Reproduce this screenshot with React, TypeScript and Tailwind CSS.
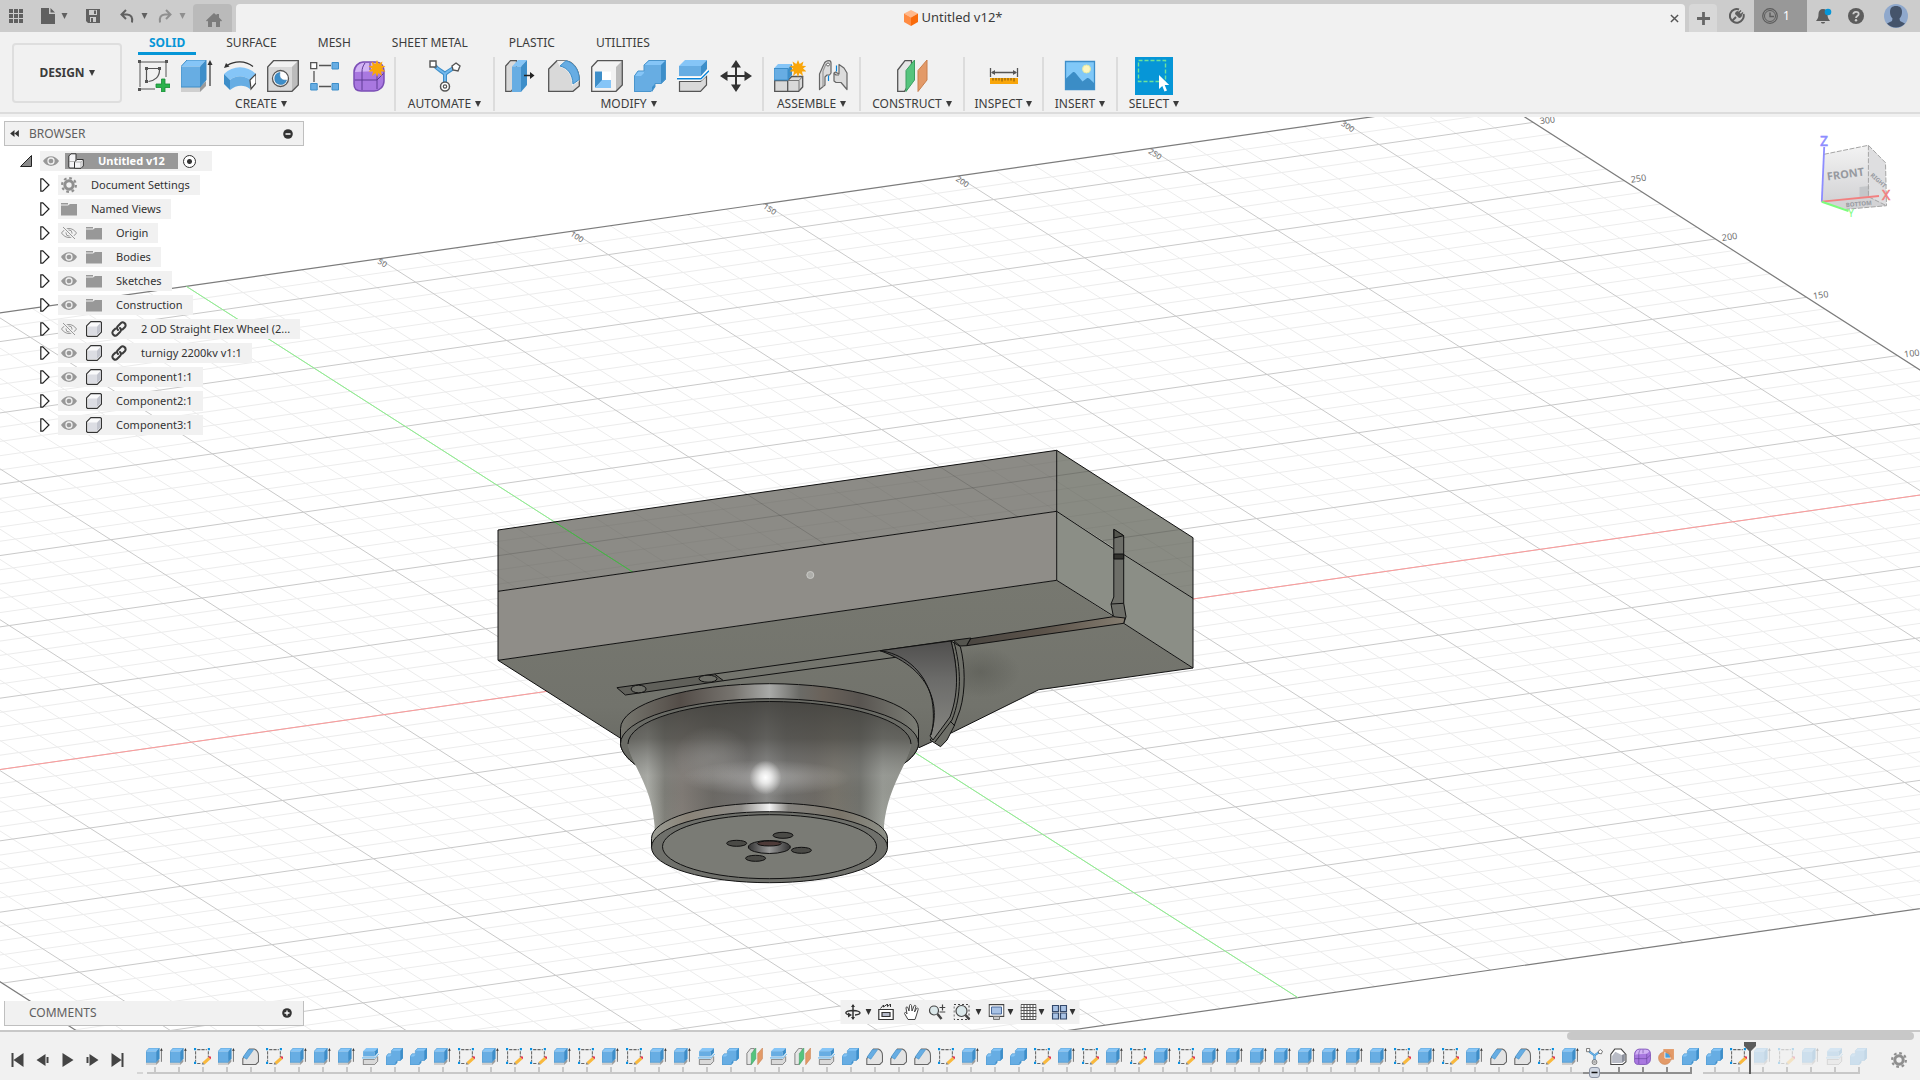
import { ReactNode } from 'react'
import cn from 'clsx'

interface IconProps {
  className?: string
}

const Caret = ({ className = 'w-[6px] h-[6px] text-[#3c3c3c]' }: IconProps) => (
  <svg viewBox="0 0 8 8" className={cn('shrink-0', className)} fill="currentColor">
    <path d="M0 0h8L4 8z" />
  </svg>
)

/* ---------- feature icons (toolbar + timeline) ---------- */

const SketchIcon = ({ className }: IconProps) => (
  <svg viewBox="0 0 32 32" className={className} fill="none">
    <path d="M3 2h24M2 3v24M28 3v14M3 29h14" stroke="#555" strokeWidth="1" />
    <path d="M0 0h3v3H0zM27 0h3v3h-3zM0 28h3v3H0zM7 7h3v3H7zM20 7h3v3h-3zM7 20h3v3H7z" fill="#555" />
    <path d="M10 8.500h10M8.500 10v10M21.500 10c0 7-5 11-11 11.500" stroke="#555" strokeWidth="1.200" />
    <path d="M23.500 19h3.500v5h5v3.500h-5V32h-3.500v-4.500H18V24h5.500z" fill="#2bb24c" stroke="#178a35" strokeWidth=".8" />
  </svg>
)

const SketchSmallIcon = ({ className }: IconProps) => (
  <svg viewBox="0 0 16 16" className={className} fill="none">
    <path d="M3 1.500h9M1.500 3v10M13.500 3v6M3 14.500h4" stroke="#666" strokeDasharray="3 1" />
    <path d="M0 0h2v2H0zM13 0h2v2h-2zM0 13h2v2H0z" fill="#0a8fe0" />
    <path d="M8 13.500l5.500-5 2 2-5.500 5z" fill="#f9b93e" />
    <path d="M13.500 8.500l1.500-1 1.500 1.500-1 1.500z" fill="#e8364f" />
    <path d="M8 13.500l2 2H7.300z" fill="#777" />
  </svg>
)

const ExtrudeIcon = ({ className }: IconProps) => (
  <svg viewBox="0 0 32 32" className={className}>
    <path d="M0 27h19v5H0z" fill="#cfcfcf" />
    <path d="M19 27l6-6v5l-6 6z" fill="#9a9a9a" />
    <path d="M0 6.500L6 0h19l-6 6.500z" fill="#85c5f7" />
    <path d="M0 6.500h19V27H0z" fill="#67ade3" />
    <path d="M19 6.500L25 0v20l-6 7z" fill="#3d8ec9" />
    <path d="M0 6.500L6 0h19v20l-6 7H0z" fill="none" stroke="#3f8dc6" />
    <path d="M29 4v22" stroke="#333" strokeWidth="1.200" />
    <path d="M29 0l2.500 5h-5z" fill="#333" />
  </svg>
)

const RevolveIcon = ({ className }: IconProps) => (
  <svg viewBox="0 0 32 32" className={className}>
    <path d="M3 5.500C11 .5 21 .5 29 6.500" fill="none" stroke="#333" strokeWidth="1.300" />
    <path d="M0 8l2-5 3.500 3.500z" fill="#333" />
    <path d="M0 14c9-9 23-9 32 0l-6 6c-6-5-14-5-20 0z" fill="#85c5f7" />
    <path d="M0 14l6 6v10l-6-6z" fill="#3d8ec9" />
    <path d="M6 20c6-5 14-5 20 0v9c-6-5-14-4-20 1z" fill="#67ade3" />
    <path d="M26 20l6-6v9l-5 6z" fill="#fff" stroke="#444" strokeWidth="1.200" />
  </svg>
)

const HoleIcon = ({ className }: IconProps) => (
  <svg viewBox="0 0 32 32" className={className}>
    <path d="M.7 7L6.500.7h24.800V25L25 31.300H.7z" fill="#d9d9d9" />
    <path d="M.7 7L6.500.7h24.800L25 7z" fill="#f2f2f2" />
    <path d="M25 7l6.300-6.300V25L25 31.300z" fill="#bcbcbc" />
    <path d="M.7 7L6.500.7h24.800V25L25 31.300H.7z" fill="none" stroke="#555" strokeWidth="1.300" />
    <circle cx="13.500" cy="18.500" r="8" fill="#fff" stroke="#555" strokeWidth="1.300" />
    <path d="M13 12.500a6 6 0 1 0 6.500 7.500c-4 1-8-2-6.500-7.500z" fill="#3d8ec9" stroke="#2f78b0" strokeWidth=".6" />
  </svg>
)

const PatternIcon = ({ className }: IconProps) => (
  <svg viewBox="0 0 32 32" className={className}>
    <path d="M9 5.500h12M9 26.500h12M4 11v11" stroke="#555" strokeWidth="1.300" fill="none" />
    <path d="M.7 2.700h6v6h-6z" fill="#fff" stroke="#555" strokeWidth="1.300" />
    <path d="M22 2.500h6.500V9H22zM.7 23.500h6.500V30H.7zM22 23.500h6.500V30H22z" fill="#67ade3" stroke="#3d8ec9" />
  </svg>
)

const FormBody = () => (
  <>
    <path d="M1 12c0-6 5-10 9-10h12c6 0 9 4 9 9v10c0 6-5 10-10 10H8c-5 0-7-3-7-7z" fill="#a978e0" />
    <path d="M2 12C3 6 7 2.500 11 2.500h11c3 0 6 2 7 4L24 11z" fill="#d2b3f5" />
    <path d="M12 3c-2 3-3 5-3 9v18M1.500 20H24l7-7M17 3v7M24 11v18" fill="none" stroke="#5f3a94" strokeWidth="1" />
    <path d="M1 12c0-6 5-10 9-10h12c6 0 9 4 9 9v10c0 6-5 10-10 10H8c-5 0-7-3-7-7z" fill="none" stroke="#7b4fb5" strokeWidth="1.500" />
  </>
)

const Spark = () => (
  <path d="M0-8l1.700 4 3.800-2.500-1.200 4.300L8.500-2 5 .5 8.500 3.500 4 3.500 5 8 1.500 5 0 9-1.500 5-5 8-4 3.500-8.500 3.500-5 .5-8.500-2-4.300-2.200-5.500-6.500-1.700-4z" fill="#f9a60a" />
)

const FormIcon = ({ className }: IconProps) => (
  <svg viewBox="0 0 32 32" className={cn('overflow-visible', className)}>
    <FormBody />
    <g transform="translate(24 8)"><Spark /></g>
  </svg>
)

const FormSmallIcon = ({ className }: IconProps) => (
  <svg viewBox="0 0 32 32" className={className}><FormBody /></svg>
)

const AutomateIcon = ({ className }: IconProps) => (
  <svg viewBox="0 0 32 32" className={className}>
    <path d="M5 5c4 5 8 6 11 9 3-3 6-4 10-7M16 13v11" fill="none" stroke="#3d8ec9" strokeWidth="4" />
    <path d="M5 5c4 5 8 6 11 9 3-3 6-4 10-7M16 13v11" fill="none" stroke="#73b8ec" strokeWidth="2" />
    <path d="M1 1h6v6H1z" fill="#fff" stroke="#555" strokeWidth="1.400" />
    <path d="M27 3l4 3-2 5-5-1-1-4z" fill="#fff" stroke="#555" strokeWidth="1.400" />
    <circle cx="16" cy="26.500" r="4.500" fill="#fff" stroke="#555" strokeWidth="1.500" />
    <circle cx="16" cy="26.500" r="1.700" fill="#fff" stroke="#555" strokeWidth="1.200" />
  </svg>
)

const PressPullIcon = ({ className }: IconProps) => (
  <svg viewBox="0 0 32 32" className={className}>
    <path d="M.7 6L5.500.7h6V25L6 31.300H.7z" fill="#d9d9d9" stroke="#555" strokeWidth="1.200" />
    <path d="M7 6.500L13 0h9l-6 6.500z" fill="#85c5f7" />
    <path d="M7 6.500h9V32H7z" fill="#67ade3" />
    <path d="M16 6.500L22 0v25l-6 7z" fill="#3d8ec9" />
    <path d="M19 15.500h7" stroke="#222" strokeWidth="1.500" />
    <path d="M25 12l4.500 3.500L25 19z" fill="#222" />
  </svg>
)

const FilletIcon = ({ className }: IconProps) => (
  <svg viewBox="0 0 32 32" className={className}>
    <path d="M.7 9L9 .7h7C25 1 31 9 31.300 20v6L25 31.300H.7z" fill="#d9d9d9" stroke="#555" strokeWidth="1.300" />
    <path d="M9 .7h8C27 2 31 11 31.300 21L24 26c0-10-4-17-12-19z" fill="#f0f0f0" />
    <path d="M12 6l6-5.300C27 3 31 11 31.300 19.500L25 24C24.500 14 20 8 12 6z" fill="#67ade3" stroke="#3d8ec9" />
  </svg>
)

const ShellIcon = ({ className }: IconProps) => (
  <svg viewBox="0 0 32 32" className={className}>
    <path d="M.7 7L6.500.7h24.800V25L25 31.300H.7z" fill="#f2f2f2" />
    <path d="M25 7l6.300-6.300V25L25 31.300z" fill="#bcbcbc" />
    <path d="M.7 7L6.500.7h24.800V25L25 31.300H.7z" fill="none" stroke="#555" strokeWidth="1.300" />
    <path d="M4 11.500h16v16H4z" fill="#fff" />
    <path d="M4 11.500h7v9L4 28z" fill="#3d8ec9" />
    <path d="M4 28l7-8h9v8z" fill="#85c5f7" />
  </svg>
)

const CombineIcon = ({ className }: IconProps) => (
  <svg viewBox="0 0 32 32" className={className}>
    <path d="M0 16l4-5h6V5l5-5h17v19l-5 5h-6v3l-4 5H0z" fill="#67ade3" />
    <path d="M10 5l5-5h17l-5 5zM0 16l4-5h6v2l-3 3z" fill="#85c5f7" />
    <path d="M27 5l5-5v19l-5 5zM18 27l3-3v3l-3 5z" fill="#3d8ec9" />
    <path d="M.5 16L4 11h6V5l5-4.500h16.500V19L27 23.500h-6V27l-4 4.500H.5z" fill="none" stroke="#4a95cc" />
  </svg>
)

const SplitIcon = ({ className }: IconProps) => (
  <svg viewBox="0 0 32 32" className={className}>
    <path d="M2 6l6-6h22l-6 6z" fill="#85c5f7" />
    <path d="M2 6h22v10H2z" fill="#67ade3" />
    <path d="M24 6l6-6v9l-6 7z" fill="#3d8ec9" />
    <path d="M2.500 21.500h21l6-6V25l-6 6.300h-21z" fill="#d9d9d9" stroke="#555" strokeWidth="1.200" />
    <path d="M0 18.700h24l8-8" fill="none" stroke="#fff" strokeWidth="3.500" />
    <path d="M0 18.700h24l8-8" fill="none" stroke="#0a84d8" strokeWidth="1.400" />
  </svg>
)

const MoveIcon = ({ className }: IconProps) => (
  <svg viewBox="0 0 32 32" className={className} fill="#333">
    <path d="M15 6h2v9h9v2h-9v9h-2v-9H6v-2h9z" />
    <path d="M16 0l5 7.500H11zM16 32l5-7.500H11zM0 16l7.500-5v10zM32 16l-7.500-5v10z" />
  </svg>
)

const NewComponentIcon = ({ className }: IconProps) => (
  <svg viewBox="0 0 32 32" className={className}>
    <path d="M.7 20.500h13v10.800H.7zM13.700 20.500l4-4h11v10.500l-4 4.300h-11z" fill="#d9d9d9" stroke="#555" strokeWidth="1.300" />
    <path d="M25 20.500l3.700-4M13.700 20.500H25v10.500" fill="none" stroke="#777" />
    <path d="M0 8.500L4 4h14l-4 4.500z" fill="#85c5f7" />
    <path d="M0 8.500h14V20H0z" fill="#67ade3" stroke="#3d8ec9" />
    <path d="M14 8.500L18 4v11l-4 5z" fill="#3d8ec9" />
    <g transform="translate(24 8)"><Spark /></g>
  </svg>
)

const JointIcon = ({ className }: IconProps) => (
  <svg viewBox="0 0 32 32" className={className} fill="#dcdcdc" stroke="#666" strokeWidth="1.200" strokeLinejoin="round">
    <path d="M2.500 14L7 4c1-2.500 3-3.300 5-3.300 1.500 0 2 1 2 2.300v10l-1.500 2H10L8 17v8l-5.500 4.500z" />
    <path d="M6 11v16M6 11l3-7" fill="none" stroke="#999" />
    <path d="M30 29.500V13l-3-5-5-3.500V14l-3.500-2-1.500 1v8l2 1.500h5l6 7z" />
    <path d="M17 13.500l2 1.500h3" fill="none" />
    <circle cx="11" cy="4.500" r="1.500" fill="#fff" strokeWidth="1" />
    <path d="M11.500 15.500v5.500M19.500 5.500v6" stroke="#0a84d8" />
  </svg>
)

const PlaneIcon = ({ className }: IconProps) => (
  <svg viewBox="0 0 32 32" className={className}>
    <path d="M1.700 10L9 .7h6.500V20L8.500 31.300H1.700z" fill="#e6e6e6" stroke="#555" strokeWidth="1.300" />
    <path d="M10 10.500L18.500 0v20L10 31.500z" fill="#55c47d" stroke="#3a9f60" />
    <path d="M22 10.500L31 0v20l-9 11.500z" fill="#e39a68" stroke="#c97f4c" />
  </svg>
)

const MeasureIcon = ({ className }: IconProps) => (
  <svg viewBox="0 0 32 32" className={className}>
    <path d="M2.500 8v9M29.500 8v9M4 12.500h24" stroke="#555" strokeWidth="1.300" />
    <path d="M3 12.500l4-2.500v5zM29 12.500L25 10v5z" fill="#555" />
    <path d="M2 18h28v6H2z" fill="#f9a60a" />
    <path d="M5 18v2.500M8 18v2.500M11 18v2.500M14 18v3.500M17 18v2.500M20 18v2.500M23 18v2.500M26 18v3.500" stroke="#7a5208" />
  </svg>
)

const ImageIcon = ({ className }: IconProps) => (
  <svg viewBox="0 0 32 32" className={className}>
    <path d="M1.500 1.500h29v28h-29z" fill="#80c8f8" />
    <path d="M1.500 19l7-6.500c1-.8 2-.6 3 .5l7 8.500 4-3c1-.6 2-.5 3 .3l5 4.700v6h-29z" fill="#3b8dc6" />
    <circle cx="22.500" cy="9" r="4" fill="#fdf6bf" stroke="#dfe9a8" />
    <path d="M1.500 1.500h29v28h-29z" fill="none" stroke="#3d8ec9" strokeWidth="1.300" />
  </svg>
)

const SelectIcon = ({ className }: IconProps) => (
  <svg viewBox="0 0 38 38" className={className}>
    <path d="M0 0h38v38H0z" fill="#0696d7" />
    <path d="M3.500 3.500h27v21h-27z" fill="none" stroke="#6de39b" strokeWidth="1.400" strokeDasharray="4 2" />
    <path d="M24 18v14l3.300-3 2.200 5.500 2.500-1-2.300-5.500h4.500z" fill="#fff" />
  </svg>
)

const ChamferIcon = ({ className }: IconProps) => (
  <svg viewBox="0 0 32 32" className={className}>
    <path d="M1.500 20L14 2h9c5 2 8 6 8 12v12l-5 5H1.500z" fill="#e3e3e3" stroke="#666" strokeWidth="2" />
    <path d="M2 17L12 3h10L9 21z" fill="#67ade3" stroke="#3d8ec9" />
  </svg>
)

const DomeIcon = ({ className }: IconProps) => (
  <svg viewBox="0 0 32 32" className={className}>
    <path d="M1.500 12L9 2h12l9 10v14l-6 5H1.500z" fill="#fff" stroke="#444" strokeWidth="2" />
    <path d="M4 28V15l6-8 12 6v15z" fill="#b9bcc6" />
    <path d="M22 13l6-2v13l-6 4z" fill="#8b8f9b" />
  </svg>
)

const DerivedIcon = ({ className }: IconProps) => (
  <svg viewBox="0 0 32 32" className={className}>
    <path d="M10 2h20v20H10z" fill="#e39a68" />
    <circle cx="13" cy="19" r="12" fill="#e39a68" stroke="#c97f4c" />
    <path d="M13 19V9a10 10 0 0 1 10 10z" fill="#4a9fdc" />
    <path d="M13 7v12h12" fill="none" stroke="#fff" strokeWidth="1.500" />
  </svg>
)

/* ---------- title bar ---------- */

const TitleBar = () => (
  <header className="flex h-8 bg-[#cccccc] text-[#606060]">
    <div className="flex items-center pl-[9px] w-[193px] shrink-0">
      <button aria-label="Data panel">
        <svg viewBox="0 0 14 14" className="w-[14px] h-[14px]" fill="currentColor">
          <path d="M0 0h4v4H0zM5 0h4v4H5zM10 0h4v4h-4zM0 5h4v4H0zM5 5h4v4H5zM10 5h4v4h-4zM0 10h4v4H0zM5 10h4v4H5zM10 10h4v4h-4z" />
        </svg>
      </button>
      <button aria-label="File" className="flex items-center gap-[6px] ml-[18px]">
        <svg viewBox="0 0 14 16" className="w-[14px] h-4" fill="currentColor">
          <path d="M0 0h8v6h6v10H0zM9.500 0L14 4.500H9.500z" />
        </svg>
        <Caret className="w-[7px] h-[6px]" />
      </button>
      <button aria-label="Save" className="ml-[18px]">
        <svg viewBox="0 0 14 14" className="w-[14px] h-[14px]" fill="currentColor">
          <path fillRule="evenodd" d="M0 0h14v14H2l-2-2zM3 1v5h8V1zM4 8v5h6V8zM8 1.500h2v3.500H8zM5 9h2v4H5z" />
        </svg>
      </button>
      <button aria-label="Undo" className="flex items-center gap-[7px] ml-5">
        <svg viewBox="0 0 14 14" className="w-[14px] h-[14px]" fill="none" stroke="currentColor" strokeWidth="2">
          <path d="M6 1L1.500 5.500 6 10M2 5.500h5c4 0 6 3 5 8" />
        </svg>
        <Caret className="w-[7px] h-[6px]" />
      </button>
      <button aria-label="Redo" className="flex items-center gap-[7px] ml-[10px] text-[#8f8f8f]">
        <svg viewBox="0 0 14 14" className="w-[14px] h-[14px]" fill="none" stroke="currentColor" strokeWidth="2">
          <path d="M8 1l4.500 4.500L8 10M12 5.500H7c-4 0-6 3-5 8" />
        </svg>
        <Caret className="w-[7px] h-[6px]" />
      </button>
    </div>
    <button aria-label="Home" className="mt-1 w-[39px] shrink-0 rounded-t bg-[#bababa] flex items-center justify-center pl-[3px] pt-[3px]">
      <svg viewBox="0 0 16 14" className="w-4 h-[14px]" fill="#7c7c7c">
        <path d="M8 0l2.500 2.200V1H13v3.500L16 7.500l-1 1-1-.8V14h-4V9H6v5H2V7.700l-1 .8-1-1z" />
      </svg>
    </button>
    <div className="flex-1 mt-1 ml-1 rounded-t bg-[#f1f1f1] flex items-center">
      <div className="flex-1 flex items-center justify-center gap-1 text-[13px] text-[#3c3c3c]">
        <svg viewBox="0 0 14 16" className="w-[14px] h-4">
          <path d="M7 0l7 3.500L7 7.500 0 3.500z" fill="#ffb98c" />
          <path d="M0 3.500l7 4V16l-7-4z" fill="#ff8b42" />
          <path d="M14 3.500l-7 4V16l7-4z" fill="#f96b0c" />
        </svg>
        <span>Untitled v12*</span>
      </div>
      <button aria-label="Close tab" className="mr-[6px]">
        <svg viewBox="0 0 10 10" className="w-[9px] h-[9px]" stroke="#555" strokeWidth="1.600">
          <path d="M1 1l8 8M9 1L1 9" />
        </svg>
      </button>
    </div>
    <button aria-label="New tab" className="mt-1 ml-1 w-7 rounded-t bg-[#d8d8d8] flex items-center justify-center">
      <svg viewBox="0 0 14 14" className="w-[13px] h-[13px]" fill="#666"><path d="M5.500 0h3v5.500H14v3H8.500V14h-3V8.500H0v-3h5.500z" /></svg>
    </button>
    <button aria-label="Extensions" className="ml-3">
      <svg viewBox="0 0 16 16" className="w-4 h-4" fill="none">
        <path d="M13.500 11.500a6.800 6.800 0 1 1-3.500-10M14.500 6c.5 2 .2 4-1 5.500" stroke="#5c5c5c" strokeWidth="2" />
        <path d="M3 13l4-4" stroke="#5c5c5c" strokeWidth="2" />
        <path d="M6 6l4 4c2 0 3-1.500 3-3L11 5 9 3C7.500 3 6 4 6 6z" fill="#5c5c5c" />
        <path d="M9.500 5L12 2.500M11.500 7L14 4.500" stroke="#5c5c5c" strokeWidth="1.400" />
      </svg>
    </button>
    <button aria-label="Job status" className="ml-[9px] w-[53px] bg-[#989898] flex items-center gap-[5px] pl-2 text-[12px] text-white">
      <svg viewBox="0 0 16 16" className="w-4 h-4" fill="none" stroke="#5c5c5c">
        <circle cx="8" cy="8" r="7.300" strokeWidth="1.200" />
        <circle cx="8" cy="8" r="5.500" strokeWidth="1" />
        <path d="M8 4.500V8.500h4" strokeWidth="1.400" />
      </svg>
      1
    </button>
    <button aria-label="Notifications" className="ml-[9px]">
      <svg viewBox="0 0 16 16" className="w-4 h-4">
        <path d="M7 1c3 0 4.500 2 4.500 5S12 10.500 14 13H0c2-2.500 2.500-4 2.500-7S4 1 7 1zM5 14h4c0 2-4 2-4 0z" fill="#5c5c5c" />
        <circle cx="12" cy="4" r="3.300" fill="#0696d7" />
      </svg>
    </button>
    <button aria-label="Help" className="ml-4">
      <svg viewBox="0 0 16 16" className="w-4 h-4">
        <circle cx="8" cy="8" r="8" fill="#5c5c5c" />
        <path d="M5.300 6.300C5.300 3 10.700 3 10.700 6c0 2-2.700 2-2.700 4" fill="none" stroke="#ccc" strokeWidth="1.800" />
        <circle cx="8" cy="12.300" r="1.200" fill="#ccc" />
      </svg>
    </button>
    <button aria-label="Account" className="ml-5 mr-3">
      <svg viewBox="0 0 24 24" className="w-6 h-6">
        <circle cx="12" cy="12" r="12" fill="#8fa8cc" />
        <path d="M12 2c4 0 6 2 6 6 0 3-1 5-2.500 6.500L16 17l5 2.500A12 12 0 0 1 3 19.500L8 17l.5-2.500C7 13 6 11 6 8c0-4 2-6 6-6z" fill="#45546b" />
      </svg>
    </button>
  </header>
)

/* ---------- ribbon ---------- */

const tabs = ['SOLID', 'SURFACE', 'MESH', 'SHEET METAL', 'PLASTIC', 'UTILITIES']

type Tool = [string, (p: IconProps) => ReactNode]

const groups: { name: string; width: string; tools: Tool[] }[] = [
  {
    name: 'CREATE',
    width: 'w-[268px]',
    tools: [
      ['Create Sketch', SketchIcon],
      ['Extrude', ExtrudeIcon],
      ['Revolve', RevolveIcon],
      ['Hole', HoleIcon],
      ['Rectangular Pattern', PatternIcon],
      ['Create Form', FormIcon],
    ],
  },
  { name: 'AUTOMATE', width: 'w-[99px]', tools: [['Automated Modeling', AutomateIcon]] },
  {
    name: 'MODIFY',
    width: 'w-[269px]',
    tools: [
      ['Press Pull', PressPullIcon],
      ['Fillet', FilletIcon],
      ['Shell', ShellIcon],
      ['Combine', CombineIcon],
      ['Split Body', SplitIcon],
      ['Move/Copy', MoveIcon],
    ],
  },
  { name: 'ASSEMBLE', width: 'w-[97px]', tools: [['New Component', NewComponentIcon], ['Joint', JointIcon]] },
  { name: 'CONSTRUCT', width: 'w-[104px]', tools: [['Offset Plane', PlaneIcon]] },
  { name: 'INSPECT', width: 'w-[79px]', tools: [['Measure', MeasureIcon]] },
  { name: 'INSERT', width: 'w-[74px]', tools: [['Insert Image', ImageIcon]] },
  { name: 'SELECT', width: 'w-[72px]', tools: [['Select', SelectIcon]] },
]

const Ribbon = () => (
  <div className="flex h-[82px] bg-[#f1f1f1] border-b-2 border-[#dcdcdc] text-[12px] text-[#3c3c3c]">
    <button className="ml-3 mt-[11px] w-[110px] h-[60px] shrink-0 border-2 border-[#dedede] rounded font-bold flex items-center justify-center gap-1">
      DESIGN <Caret />
    </button>
    <div>
      <nav className="flex gap-[19px] ml-4">
        {tabs.map((t, i) => (
          <button
            key={t}
            className={cn('px-[11px] h-[23px] pt-[2px] leading-4 border-b-[3px] whitespace-nowrap', i === 0 ? 'font-bold text-[#0696d7] border-[#0696d7]' : 'border-transparent')}
          >
            {t}
          </button>
        ))}
      </nav>
      <div className="flex mt-[2px] ml-[6px]">
        {groups.map((g, i) => (
          <div key={g.name} className={cn('h-[54px] flex flex-col items-center border-[#dcdcdc]', g.width, i < groups.length - 1 && 'border-r-2')}>
            <div className="flex gap-[11px] h-[38px] shrink-0 items-center">
              {g.tools.map(([name, Icon]) => (
                <button key={name} aria-label={name}>
                  <Icon className={name === 'Select' ? 'w-[38px] h-[38px]' : 'w-8 h-8'} />
                </button>
              ))}
            </div>
            <button className="flex shrink-0 items-center gap-1 leading-4 mt-[1px] whitespace-nowrap">
              {g.name} <Caret />
            </button>
          </div>
        ))}
      </div>
    </div>
  </div>
)

/* ---------- canvas ---------- */

// grid runs in 10 mm steps, every 5th line is major; screen vectors are per 50 mm
const O = [769.4, 659.5]
const A = [192.7, -27.55]
const B = [91.1, 58.3]
const X0 = -27, X1 = 34, Y0 = -32, Y1 = 29

const pt = (x: number, y: number) => [
  O[0] + (A[0] * x + B[0] * y) / 5,
  O[1] + (A[1] * x + B[1] * y) / 5,
]

const seg = (x1: number, y1: number, x2: number, y2: number) => {
  const [a, b] = pt(x1, y1)
  const [c, d] = pt(x2, y2)
  return `M${a.toFixed(1)} ${b.toFixed(1)}L${c.toFixed(1)} ${d.toFixed(1)}`
}

const range = (a: number, b: number) => Array.from({ length: b - a + 1 }, (_, i) => a + i)
const lines = (major: boolean) =>
  [
    ...range(X0 + 1, X1 - 1).filter((x) => (x % 5 === 0) === major).map((x) => seg(x, Y0, x, Y1)),
    ...range(Y0 + 1, Y1 - 1).filter((y) => (y % 5 === 0) === major).map((y) => seg(X0, y, X1, y)),
  ].join('')

const minorPath = lines(false)
const majorPath = lines(true)
const edgePath = seg(X0, Y0, X1, Y0) + seg(X1, Y0, X1, Y1) + seg(X1, Y1, X0, Y1) + seg(X0, Y1, X0, Y0)

const Grid = () => (
  <g fill="none" strokeWidth="1">
    <path d={minorPath} stroke="#ececec" />
    <path d={majorPath} stroke="#c9c9c9" />
    <path d={edgePath} stroke="#7c7c7c" strokeWidth="1.200" />
    <path d={seg(X0, 0, X1, 0)} stroke="#ff9a9a" />
    <path d={seg(0, Y0, 0, Y1)} stroke="#8df58d" />
  </g>
)

const Model = () => (
  <g strokeLinejoin="round">
    {/* block */}
    <path d="M498 530L1056.700 450.300V511.300L498 591.300z" fill="#8c8b86" />
    <path d="M1056.700 450.300L1193 537.700V598.300L1056.700 511.300z" fill="#898b83" />
    <path d="M498 591.300L1056.700 511.300V580.300L498 660.300z" fill="#8f8d88" />
    <path d="M1056.700 511.300L1193 598.300V668L1056.700 580.300z" fill="#8b8e86" />
    <path d="M498 660.300L1056.700 580.300 1193 668 1038.800 689.700 953.800 731.700 919 747.700 770 790 620.600 738.300z" fill="url(#under)" />
    <ellipse cx="980" cy="672" rx="40" ry="26" fill="url(#soft)" />
    <g clipPath="url(#upper)">
      <path d={minorPath} stroke="#000" strokeOpacity=".04" fill="none" />
      <path d={majorPath} stroke="#000" strokeOpacity=".14" fill="none" />
      <path d={seg(0, Y0, 0, 0)} stroke="#3fc03f" fill="none" />
    </g>
    <g fill="none" stroke="#111">
      <path d="M498 660.300V530L1056.700 450.300 1193 537.700V668L1038.800 689.700 953.800 731.700 919 747.700M498 660.300L620.600 738.300M1056.700 450.300V580.300L498 660.300M1056.700 580.300L1113.300 616M1123.700 623.300L1193 668M498 591.300L1056.700 511.300 1113.800 549M1123.700 554.500L1193 598.300" />
    </g>

    {/* wire slot */}
    <path d="M1113.800 529.300L1123.700 535.700V603.300L1126 616.700 1123.700 623.300 1113.300 616 1111 604 1113.800 597z" fill="#6d6e68" stroke="#111" />
    <path d="M1114 529.300L1123.700 535.700 1114 538z" fill="#55564f" stroke="#111" />
    <path d="M1114 554h9.700v5H1114z" fill="#33332f" stroke="#111" />
    <path d="M1111 604l12.700-.7" stroke="#111" />
    <path d="M970.800 638.700L1113.300 616.700 1125 618 1123.700 623.300 966.500 645.700z" fill="url(#groove)" stroke="#111" />
    <path d="M953.300 640.300L970.800 638 966.500 645.700 960 646z" fill="#55554f" stroke="#111" />
    <path d="M616.900 687.700L714.500 674 723.500 680.700 625.300 695z" fill="#60605a" stroke="#111" />
    <path d="M714.500 674L880 650.700 953.300 640.300M723.500 680.700L900 656.700" fill="none" stroke="#111" />
    <ellipse cx="638.600" cy="689" rx="7.500" ry="3.800" fill="#6e6f68" stroke="#111" />
    <ellipse cx="708" cy="678.700" rx="9" ry="3.500" fill="#6e6f68" stroke="#111" />

    {/* blade */}
    <path d="M951 641L960.400 646.700C965 665 966 690 960 710L953.800 726.700 947 740 940.600 746.700 930 740 947.200 720C960 690 957 665 951 641z" fill="#6e6f68" stroke="#111" />
    <path d="M880 650.700L951 641C957 665 960 690 950 717L933 740 930 736C940 712 936 670 880 650.700z" fill="url(#blade)" stroke="#111" />
    <path d="M880 650.700C900 653 925 668 932 700C934 712 934 725 931 735M954 642C961 668 962 695 952 720L935 742M950 721L955 726" fill="none" stroke="#111" />

    {/* upper flange */}
    <path d="M620.500 743.700V728.700A149 45 0 0 1 918.500 728.700V743.700C918.500 750 912 759 901.400 765H636C627 759 620.500 750 620.500 743.700z" fill="url(#rim)" stroke="#111" />
    <path d="M620.500 743.700A149 45 0 0 1 918.500 743.700C918.500 750 912 759 901.400 765H636C627 759 620.500 750 620.500 743.700z" fill="#6a6b65" stroke="#111" />
    <path d="M628 744A141.500 42.500 0 0 1 911 744C908 765 888 785 884 826V850H654.600V826C652 785 631 765 628 744z" fill="url(#metal)" />
    <path d="M628 744A141.500 42.500 0 0 1 911 744C908 765 888 785 884 826V850H654.600V826C652 785 631 765 628 744z" fill="url(#shade)" />
    <ellipse cx="712" cy="756" rx="38" ry="30" fill="url(#glow)" opacity=".16" />
    <ellipse cx="766" cy="778" rx="85" ry="18" fill="url(#glow)" opacity=".28" />
    <ellipse cx="765.500" cy="777.500" rx="16" ry="17" fill="url(#glow)" />
    <path d="M628 744A141.500 42.500 0 0 1 911 744" fill="none" stroke="#111" />

    {/* lower flange */}
    <path d="M651.500 847V838.500A118 35.500 0 0 1 887.500 838.500V847z" fill="url(#rim2)" stroke="#111" />
    <ellipse cx="769.500" cy="847.200" rx="118" ry="35.500" fill="#6f706b" stroke="#111" />
    <ellipse cx="769.500" cy="846.700" rx="107" ry="32" fill="#7a7b75" stroke="#111" />
    <g fill="#4a4a46" stroke="#111">
      <ellipse cx="783" cy="835.300" rx="10" ry="3" />
      <ellipse cx="736.700" cy="843.300" rx="10" ry="3" />
      <ellipse cx="801.400" cy="850.300" rx="10" ry="3" />
      <ellipse cx="755.600" cy="858.300" rx="10" ry="3" />
      <ellipse cx="769.300" cy="847" rx="21" ry="6.500" fill="url(#bore)" />
      <ellipse cx="769.300" cy="843.500" rx="12" ry="2.500" fill="#4d3a38" />
    </g>
    <circle cx="810.300" cy="575" r="3.500" fill="#aeaeaa" stroke="#c9c9c6" />
  </g>
)

const Defs = () => (
  <defs>
    <clipPath id="upper"><path d="M498 530L1056.700 450.300 1193 537.700V598.300L1056.700 511.300 498 591.300z" /></clipPath>
    <linearGradient id="under" x1="0" x2="0" y1="0" y2="1">
      <stop offset="0" stopColor="#777870" /><stop offset=".6" stopColor="#72736c" /><stop offset="1" stopColor="#62635d" />
    </linearGradient>
    <radialGradient id="soft"><stop offset="0" stopColor="#4c4d47" stopOpacity=".4" /><stop offset="1" stopColor="#4c4d47" stopOpacity="0" /></radialGradient>
    <linearGradient id="groove"><stop offset="0" stopColor="#4a4641" /><stop offset=".5" stopColor="#5d544b" /><stop offset="1" stopColor="#857d70" /></linearGradient>
    <linearGradient id="blade" x1="0" x2="0" y1="0" y2="1">
      <stop offset="0" stopColor="#504f4e" /><stop offset=".4" stopColor="#6c6c6a" /><stop offset="1" stopColor="#868681" />
    </linearGradient>
    <linearGradient id="rim">
      <stop offset="0" stopColor="#77776f" /><stop offset=".2" stopColor="#544d48" /><stop offset=".38" stopColor="#77746f" />
      <stop offset=".5" stopColor="#a9aaa8" /><stop offset=".6" stopColor="#6b6b67" /><stop offset=".68" stopColor="#6a625a" />
      <stop offset=".8" stopColor="#585450" /><stop offset="1" stopColor="#7b7d75" />
    </linearGradient>
    <linearGradient id="rim2">
      <stop offset="0" stopColor="#9a9c94" /><stop offset=".15" stopColor="#8a8378" /><stop offset=".38" stopColor="#8d8b87" />
      <stop offset=".5" stopColor="#f2f2f2" /><stop offset=".58" stopColor="#85837f" /><stop offset=".8" stopColor="#7a7469" /><stop offset="1" stopColor="#8d9088" />
    </linearGradient>
    <linearGradient id="metal">
      <stop offset="0" stopColor="#a2a49d" /><stop offset=".07" stopColor="#b8bab3" /><stop offset=".13" stopColor="#83837c" /><stop offset=".19" stopColor="#86807a" />
      <stop offset=".3" stopColor="#6f6c67" /><stop offset=".42" stopColor="#757371" /><stop offset=".49" stopColor="#929290" /><stop offset=".56" stopColor="#73726f" />
      <stop offset=".66" stopColor="#716d67" /><stop offset=".73" stopColor="#7b776d" /><stop offset=".82" stopColor="#74756f" /><stop offset=".9" stopColor="#a2a59e" /><stop offset="1" stopColor="#9a9c94" />
    </linearGradient>
    <linearGradient id="shade" x1="0" x2="0" y1="0" y2="1">
      <stop offset="0" stopColor="#44433f" stopOpacity=".9" /><stop offset=".25" stopColor="#4b4a46" stopOpacity=".7" />
      <stop offset=".5" stopColor="#777" stopOpacity=".25" /><stop offset=".62" stopColor="#555" stopOpacity=".15" /><stop offset="1" stopColor="#666" stopOpacity="0" />
    </linearGradient>
    <radialGradient id="glow"><stop offset="0" stopColor="#fff" /><stop offset=".35" stopColor="#fff" stopOpacity=".75" /><stop offset="1" stopColor="#fff" stopOpacity="0" /></radialGradient>
    <linearGradient id="bore"><stop offset="0" stopColor="#333" /><stop offset=".5" stopColor="#999" /><stop offset="1" stopColor="#333" /></linearGradient>
  </defs>
)

const topLabels = [50, 100, 150, 200, 250, 300]
const sideLabels = [300, 250, 200, 150, 100]

const Canvas = () => (
  <svg viewBox="0 117 1920 913" preserveAspectRatio="xMidYMid slice" className="absolute inset-0 w-full h-full">
    <Defs />
    <Grid />
    <g fill="#6e6e6e" fontSize="9">
      {topLabels.map((v) => {
        const [x, y] = pt(v / 10, Y0)
        return <text key={v} transform={`translate(${x - 2} ${y + 4}) rotate(33)`} fontSize="8">{v}</text>
      })}
      {sideLabels.map((v) => {
        const [x, y] = pt(X1, -v / 10)
        return <text key={v} transform={`translate(${x + 7} ${y + 2}) rotate(-8)`}>{v}</text>
      })}
    </g>
    <Model />
  </svg>
)

const ViewCube = () => (
  <svg viewBox="1815 130 90 95" className="absolute right-[17px] top-[13px] w-[90px] h-[95px]">
    <defs>
      <linearGradient id="face" x1="0" x2="0" y1="0" y2="1"><stop offset="0" stopColor="#f3f3f3" /><stop offset="1" stopColor="#d3d3d5" /></linearGradient>
    </defs>
    <path d="M1826 154.300L1870.400 145.300 1871.400 196.700 1823.800 201.700z" fill="url(#face)" />
    <path d="M1870.400 145.300L1887.500 162.700 1888.500 205.700 1871.400 196.700z" fill="#dedee0" />
    <path d="M1823.800 201.700L1871.400 196.700 1888.500 205.700 1848.300 209.300z" fill="#d3d3d5" />
    <path d="M1861.500 187l9.800-1v10.500l-9.800 1z" fill="#c4c6c9" />
    <path d="M1826 154.300L1870.400 145.300 1887.500 162.700 1888.500 205.700 1848.300 209.300M1870.400 145.300V196.700L1888.500 205.700" fill="none" stroke="#a5a5a5" strokeDasharray="5 1.500" />
    <g fontWeight="bold" fill="#96999f" textAnchor="middle">
      <text transform="translate(1848 178) rotate(-8)" fontSize="11">FRONT</text>
      <text transform="translate(1879 182) rotate(42)" fontSize="6">RIGHT</text>
      <text transform="translate(1861 206) rotate(-5)" fontSize="6">BOTTOM</text>
    </g>
    <path d="M1826.200 147L1823.800 201.700" stroke="#8d8dff" strokeWidth="1.800" />
    <path d="M1823.800 201.700L1881 196" stroke="#f28080" strokeWidth="1.800" />
    <path d="M1823.800 201.700L1850.500 211" stroke="#7dfc7d" strokeWidth="2" />
    <g fontSize="14" textAnchor="middle">
      <text x="1826" y="146" fill="#8d8dff" stroke="#8d8dff" strokeWidth=".5">Z</text>
      <text x="1888" y="200" fill="#f28080" stroke="#f28080" strokeWidth=".5">X</text>
      <text x="1853" y="217" fill="#7dfc7d" fontSize="10">Y</text>
    </g>
  </svg>
)

/* ---------- browser tree ---------- */

const Eye = () => (
  <svg viewBox="0 0 16 16" className="w-4 h-4 shrink-0">
    <path d="M0 8c4-6.500 12-6.500 16 0-4 6.500-12 6.500-16 0z" fill="#989898" />
    <circle cx="8" cy="8" r="3" fill="#989898" stroke="#f1f1f1" strokeWidth="1.300" />
  </svg>
)

const EyeOff = () => (
  <svg viewBox="0 0 16 16" className="w-4 h-4 shrink-0" fill="none" stroke="#989898">
    <path d="M.5 8c4-6 11-6 15 0-4 6-11 6-15 0z" />
    <circle cx="8" cy="8" r="3" />
    <path d="M2 2l12 12" stroke="#f1f1f1" strokeWidth="3" />
    <path d="M2 2l12 12" />
  </svg>
)

const Folder = () => (
  <svg viewBox="0 0 16 16" className="w-4 h-4 shrink-0" fill="#989898">
    <path d="M0 2h7v1.500H0zM0 4.500h7L9 3h7v11.500H0z" />
  </svg>
)

const Gear = ({ className = 'w-4 h-4' }: IconProps) => (
  <svg viewBox="0 0 16 16" className={cn('shrink-0', className)} fill="none" stroke="#8f8f8f">
    <circle cx="8" cy="8" r="4.200" strokeWidth="3" />
    <circle cx="8" cy="8" r="6.900" strokeWidth="2.200" strokeDasharray="2.700 2.720" />
  </svg>
)

const Cube = () => (
  <svg viewBox="0 0 16 16" className="w-4 h-4 shrink-0" strokeLinejoin="round">
    <path d="M.6 4.800L4.800.6h9.700l.9.9v9.700l-4.200 4.200H1.500l-.9-.9z" fill="#fafafb" stroke="#333" strokeWidth="1.200" />
    <path d="M2 5.500h9V14H2z" fill="#dcdde3" />
    <path d="M11 5.500l3.500-3.500v8.500L11 14z" fill="#c3c5ce" />
  </svg>
)

const LinkIcon = () => (
  <svg viewBox="0 0 16 16" className="w-4 h-4 shrink-0" fill="none" stroke="#3c3c3c" strokeWidth="2" strokeLinecap="round">
    <path d="M7 9C5.500 7.500 6 6 7 5l3-3c2-2 6 1 4 4l-2.500 2.500M9 7c1.500 1.500 1 3 0 4l-3 3c-2 2-6-1-4-4l2.500-2.500" />
  </svg>
)

const Assembly = () => (
  <svg viewBox="0 0 16 16" className="w-4 h-4 shrink-0" fill="#f4f4f6" stroke="#333" strokeLinejoin="round">
    <path d="M.8 3L3 .8h5v7L6.500 15H1.500L.8 14z" />
    <path d="M6.500 9L9 6.500h6.300V13L13 15.300H6.500z" />
    <path d="M1 8.500h5M13 9v6M6.500 9H13l2-2" fill="none" stroke="#999" strokeWidth=".7" />
  </svg>
)

const rows: { label: string; kind: 'gear' | 'views' | 'folder' | 'cube' | 'link'; off?: boolean }[] = [
  { label: 'Document Settings', kind: 'gear' },
  { label: 'Named Views', kind: 'views' },
  { label: 'Origin', kind: 'folder', off: true },
  { label: 'Bodies', kind: 'folder' },
  { label: 'Sketches', kind: 'folder' },
  { label: 'Construction', kind: 'folder' },
  { label: '2 OD Straight Flex Wheel (2...', kind: 'link', off: true },
  { label: 'turnigy 2200kv v1:1', kind: 'link' },
  { label: 'Component1:1', kind: 'cube' },
  { label: 'Component2:1', kind: 'cube' },
  { label: 'Component3:1', kind: 'cube' },
]

const BrowserPanel = () => (
  <aside className="absolute left-1 top-1 w-[300px]">
    <div className="flex items-center h-[25px] px-1 bg-[#f1f1f1] border border-[#bfbfbf] text-[12px] text-[#606060]">
      <button aria-label="Collapse browser">
        <svg viewBox="0 0 10 8" className="w-[11px] h-[7px]" fill="#333"><path d="M5 0v8L0 4zM10 0v8L5 4z" /></svg>
      </button>
      <h2 className="ml-[9px] flex-1">BROWSER</h2>
      <button aria-label="Hide all" className="mr-[6px]">
        <svg viewBox="0 0 10 10" className="w-[10px] h-[10px]"><circle cx="5" cy="5" r="4.800" fill="#333" /><path d="M2.500 5h5" stroke="#fff" strokeWidth="1.500" /></svg>
      </button>
    </div>
    <ul className="mt-[5px] flex flex-col gap-1 text-[11px] text-[#333]">
      <li className="flex items-center h-5 pl-4">
        <button aria-label="Collapse" className="w-5 shrink-0">
          <svg viewBox="0 0 12 12" className="w-3 h-3"><path d="M11.500.5v11H.5z" fill="#8a8a8a" stroke="#222" /></svg>
        </button>
        <div className="flex items-center h-5 bg-[#f1f1f1] pl-[3px] pr-4 whitespace-nowrap">
          <Eye />
          <div className="flex items-center h-4 ml-[6px] pl-[3px] pr-[13px] bg-[#989898] text-white font-bold">
            <Assembly />
            <span className="ml-[14px]">Untitled v12</span>
          </div>
          <input type="radio" aria-label="Activate Untitled v12" defaultChecked className="appearance-none ml-[5px] w-[13px] h-[13px] rounded-full border border-[#333] bg-[radial-gradient(circle,#333_2px,#fff_3px)]" />
        </div>
      </li>
      {rows.map(({ label, kind, off }) => (
        <li key={label} className="flex items-center h-5 pl-9">
          <button aria-label={`Expand ${label}`} className="w-[18px] shrink-0">
            <svg viewBox="0 0 10 14" className="w-[10px] h-[14px]"><path d="M.8.800h2L9 7l-6.200 6.200h-2z" fill="#fff" stroke="#222" strokeWidth="1.200" /></svg>
          </button>
          <div className="flex items-center h-5 bg-[#f1f1f1] pl-[3px] pr-[10px] whitespace-nowrap">
            {kind === 'gear' && <Gear />}
            {kind === 'views' && <Folder />}
            {kind !== 'gear' && kind !== 'views' && (
              <span className="flex gap-[9px]">
                {off ? <EyeOff /> : <Eye />}
                {kind === 'folder' ? <Folder /> : <Cube />}
                {kind === 'link' && <LinkIcon />}
              </span>
            )}
            <span className="ml-[14px]">{label}</span>
          </div>
        </li>
      ))}
    </ul>
  </aside>
)

/* ---------- navigation bar ---------- */

const NavBar = () => (
  <div className="absolute bottom-[6px] left-1/2 -translate-x-1/2 flex items-center h-6 pl-1 pr-1 bg-[#f1f1f1]">
    <button aria-label="Orbit" className="flex items-center gap-1 mr-[6px]">
      <svg viewBox="0 0 16 16" className="w-[17px] h-4" fill="none" stroke="#333">
        <path d="M8 1v14" strokeWidth="1.500" /><path d="M8 0l2 3H6zM8 16l2-3H6z" fill="#333" stroke="none" />
        <path d="M5 11c-6-1-6-4 3-4.500 9 .5 9 4 2 4.500" strokeWidth="1.300" /><path d="M3 8.500l4 2.500-4 2.500z" fill="#333" stroke="none" />
      </svg>
      <Caret className="w-[6px] h-[6px] text-[#333]" />
    </button>
    <button aria-label="Look At" className="mr-[9px]">
      <svg viewBox="0 0 16 16" className="w-[17px] h-4" fill="none" stroke="#333" strokeWidth="1.200">
        <path d="M.8 5.500h14.400v10H.8z" fill="#fff" /><path d="M4 8.500h8v4H4z" fill="#b4b9c8" /><path d="M2.500 4.500L5.500 1v2l4-3v2.500l3-2.500v3" strokeWidth="1" />
      </svg>
    </button>
    <button aria-label="Pan" className="mr-[9px]">
      <svg viewBox="0 0 16 16" className="w-4 h-4" fill="#fff" stroke="#444" strokeLinejoin="round">
        <path d="M4.500 15.500L1 9.500c0-1.500 1.500-1.500 2.500.5L2.500 4c0-1.500 1.700-1.500 2 0L5.500 7 6 1.500c0-1.300 1.800-1.300 2 0L8.500 7l2-5c.5-1.200 2-.8 1.800.5L11 8l2-3.500c.8-1 2-.2 1.700.8L13 11l-1.500 4.500z" />
      </svg>
    </button>
    <button aria-label="Zoom" className="mr-2">
      <svg viewBox="0 0 17 16" className="w-[17px] h-4" fill="none" stroke="#444">
        <circle cx="5.500" cy="6.500" r="4.500" fill="#dbe8ea" strokeWidth="1.200" /><path d="M9 10l4 5" strokeWidth="2.500" /><path d="M11 3.500h6M14 .5v6M11 8h6" strokeWidth="1.200" />
      </svg>
    </button>
    <button aria-label="Zoom window" className="flex items-center gap-[5px] mr-[7px]">
      <svg viewBox="0 0 17 16" className="w-[17px] h-4" fill="none" stroke="#444">
        <path d="M.5.500h15v15H.5z" strokeDasharray="2 2" /><circle cx="8" cy="7" r="5.500" fill="#dbe8ea" strokeWidth="1.200" /><path d="M12 11l4 4.500" strokeWidth="2.500" />
      </svg>
      <Caret className="w-[6px] h-[6px] text-[#333]" />
    </button>
    <button aria-label="Display settings" className="flex items-center gap-[3px] mr-[7px]">
      <svg viewBox="0 0 16 16" className="w-4 h-4" fill="#fff" stroke="#444">
        <path d="M.6.600h14.800v11.800H.6z" strokeWidth="1.200" /><path d="M3 3h10v7H3z" fill="#a9c3e6" stroke="#4a6a9c" /><path d="M5 12.500h6v3H5z" fill="#ccc" stroke="#777" />
      </svg>
      <Caret className="w-[6px] h-[6px] text-[#333]" />
    </button>
    <button aria-label="Grid and snaps" className="flex items-center gap-[2px] mr-[7px]">
      <svg viewBox="0 0 16 16" className="w-4 h-4" fill="#fff" stroke="#555">
        <path d="M.5.500h15v15H.5z" /><path d="M3.500 0v16M6.500 0v16M9.500 0v16M12.500 0v16M0 3.500h16M0 6.500h16M0 9.500h16M0 12.500h16" />
      </svg>
      <Caret className="w-[6px] h-[6px] text-[#333]" />
    </button>
    <button aria-label="Viewports" className="flex items-center gap-[2px]">
      <svg viewBox="0 0 16 16" className="w-4 h-4" fill="#a9c3e6" stroke="#34496b" strokeWidth="1.200">
        <path d="M1 1.500h6v6H1zM9 1.500h6v6H9zM1 9h6v6H1zM9 9h6v6H9z" />
      </svg>
      <Caret className="w-[6px] h-[6px] text-[#333]" />
    </button>
  </div>
)

/* ---------- timeline ---------- */

const features: Record<string, Tool> = {
  E: ['Extrude', ExtrudeIcon],
  S: ['Sketch', SketchSmallIcon],
  F: ['Chamfer', ChamferIcon],
  P: ['Split Body', SplitIcon],
  C: ['Combine', CombineIcon],
  M: ['Construction Plane', PlaneIcon],
  A: ['Automated Modeling', AutomateIcon],
  D: ['Body', DomeIcon],
  U: ['Form', FormSmallIcon],
  O: ['Derive', DerivedIcon],
}

const history = 'EESEFSEEEPCCESESSESESEEPCMPMPCFFFSECCSESESESEEEEEEEESESEFFSEADUOCCSESEPC'
const groupStart = history.indexOf('A')
const groupEnd = groupStart + 4
const markerAt = groupStart + 7

const play = [
  { name: 'Go to start', d: 'M0 0h2v14H0zM12 0v14L2 7z' },
  { name: 'Step back', d: 'M9 1v12L0 7zM10 4h2v6h-2z' },
  { name: 'Play', d: 'M1 0l11 7-11 7z' },
  { name: 'Step forward', d: 'M0 4h2v6H0zM3 1l9 6-9 6z' },
  { name: 'Go to end', d: 'M0 0l10 7-10 7zM10 0h2v14h-2z' },
]

const Timeline = () => (
  <footer className="relative flex h-[50px] bg-[#f1f1f1] border-t-2 border-[#c8c8c8]">
    <div className="absolute right-[6px] top-0 w-[347px] h-2 rounded-full bg-[#c8c8c8]" />
    <div className="flex items-center gap-3 pl-[11px] pt-2 w-[137px] shrink-0">
      {play.map((p) => (
        <button key={p.name} aria-label={p.name}>
          <svg viewBox="0 0 12 14" className="w-[13px] h-[14px]" fill="#444"><path d={p.d} /></svg>
        </button>
      ))}
    </div>
    <div className="flex pt-4">
      <div className="mt-6 w-[6px] h-[2px] bg-[#d6d6d6]" />
      {history.split('').map((k, i) => {
        const [name, Icon] = features[k]
        const inGroup = i > groupStart && i <= groupEnd
        return (
          <div key={i} className="relative w-6 h-7 flex flex-col">
            <button aria-label={`${name} ${i + 1}`} className={cn('ml-[3px] w-[17px]', i >= markerAt && 'opacity-25')}>
              <Icon className="w-[17px] h-[17px]" />
            </button>
            <div className={cn('ml-[11px] mt-[2px] w-[2px] h-[5px]', inGroup ? 'bg-[#8f8f8f]' : 'bg-[#c8c8c8]', i === groupStart && 'opacity-0')} />
            <div
              className={cn(
                'h-[2px]',
                i >= groupStart && i <= groupEnd ? 'bg-[#8f8f8f]' : 'bg-[#c8c8c8]',
                i === 0 && 'ml-1',
                (i === groupEnd || i === history.length - 1) && 'w-[13px]',
              )}
            />
            {i === groupStart && (
              <button aria-label="Collapse group" className="absolute left-[6px] top-[19px]">
                <svg viewBox="0 0 11 11" className="w-[11px] h-[11px]"><rect x=".5" y=".5" width="10" height="10" rx="2.500" fill="#cfd6e2" stroke="#8b93a3" /><path d="M2.500 5.500h6" stroke="#111" strokeWidth="1.500" /></svg>
              </button>
            )}
            {i === markerAt && (
              <svg viewBox="0 0 12 32" className="absolute -left-[7px] -top-[6px] w-3 h-8" fill="#5c5c5c"><path d="M0 0h12v4L7 9v23H5V9L0 4z" /></svg>
            )}
          </div>
        )
      })}
    </div>
    <button aria-label="Timeline settings" className="ml-auto mr-[13px] pt-2">
      <Gear className="w-4 h-4" />
    </button>
  </footer>
)

export default function App() {
  return (
    <div className="flex flex-col h-screen overflow-hidden bg-[#f1f1f1] font-[Noto_Sans,sans-serif]">
      <TitleBar />
      <Ribbon />
      <main className="relative flex-1 mt-[3px] bg-white overflow-hidden">
        <Canvas />
        <ViewCube />
        <BrowserPanel />
        <div className="absolute left-1 bottom-1 w-[300px] h-[25px] flex items-center pl-6 pr-[11px] bg-[#f1f1f1] border border-t-0 border-[#bfbfbf] text-[12px] text-[#606060]">
          <h2 className="flex-1">COMMENTS</h2>
          <button aria-label="Add comment">
            <svg viewBox="0 0 10 10" className="w-[10px] h-[10px]"><circle cx="5" cy="5" r="4.800" fill="#333" /><path d="M2.500 5h5M5 2.500v5" stroke="#fff" strokeWidth="1.300" /></svg>
          </button>
        </div>
        <NavBar />
      </main>
      <Timeline />
    </div>
  )
}
